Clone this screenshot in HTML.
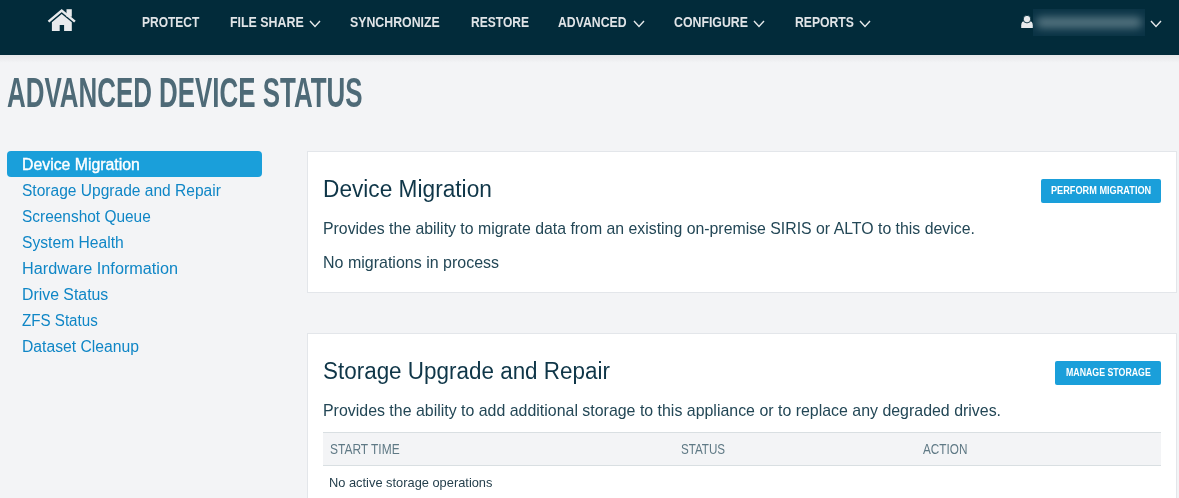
<!DOCTYPE html>
<html><head><meta charset="utf-8">
<style>
html,body{margin:0;padding:0;}
body{width:1179px;height:498px;overflow:hidden;position:relative;background:#f3f4f6;font-family:"Liberation Sans",sans-serif;}
.t{position:absolute;white-space:nowrap;transform-origin:0 0;}
#hdr{position:absolute;left:0;top:0;width:1179px;height:55px;background:#022b3a;}
#shadow{position:absolute;left:0;top:55px;width:1179px;height:8px;background:linear-gradient(#e6e7e9,#f3f4f6);}
.nav{font-weight:700;font-size:14.5px;line-height:14.5px;color:#e0e4e7;top:14.7px;}
.chev{position:absolute;}
.side{font-size:16px;line-height:16px;color:#0f86c6;left:22px;}
#active{position:absolute;left:7px;top:151px;width:255px;height:26px;background:#1a9fda;border-radius:4px;}
.card{position:absolute;left:307px;width:868px;background:#fff;border:1px solid #e3e6ea;}
.h{font-size:23.5px;line-height:23.5px;color:#0f3648;}
.p{font-size:15.7px;line-height:15.7px;color:#234756;}
.btn{position:absolute;background:#1a9fda;border-radius:2px;}
.bt{font-weight:700;font-size:11.3px;line-height:11.3px;color:#fff;}
.th{font-size:14px;line-height:14px;color:#5f7985;}
</style></head><body>
<div id="hdr"></div>
<div id="shadow"></div>
<!-- home icon -->
<svg style="position:absolute;left:47px;top:8px" width="30" height="25" viewBox="0 0 30 25">
  <path d="M1.5 13.6 L14.7 2.6 L27.9 13.6" fill="none" stroke="#e8eaec" stroke-width="2.5" stroke-linecap="butt" stroke-linejoin="miter"/>
  <rect x="19.5" y="1.2" width="5.3" height="7.5" fill="#e8eaec"/>
  <path d="M4.9 14.2 L14.7 6.1 L24.8 14.2 L24.8 23 L17.1 23 L17.1 16.9 L12.7 16.9 L12.7 23 L4.9 23 Z" fill="#e8eaec"/>
</svg>
<div class="t nav" style="left:142px;transform:scaleX(0.826)">PROTECT</div>
<div class="t nav" style="left:230px;transform:scaleX(0.855)">FILE SHARE</div>
<div class="t nav" style="left:350px;transform:scaleX(0.85)">SYNCHRONIZE</div>
<div class="t nav" style="left:471px;transform:scaleX(0.83)">RESTORE</div>
<div class="t nav" style="left:558px;transform:scaleX(0.845)">ADVANCED</div>
<div class="t nav" style="left:674px;transform:scaleX(0.85)">CONFIGURE</div>
<div class="t nav" style="left:795px;transform:scaleX(0.84)">REPORTS</div>
<svg class="chev" style="left:309px;top:20px" width="12" height="8" viewBox="0 0 12 8"><path d="M1 1 L6 6.5 L11 1" fill="none" stroke="#e4e8ea" stroke-width="1.4"/></svg>
<svg class="chev" style="left:633px;top:20px" width="12" height="8" viewBox="0 0 12 8"><path d="M1 1 L6 6.5 L11 1" fill="none" stroke="#e4e8ea" stroke-width="1.4"/></svg>
<svg class="chev" style="left:753px;top:20px" width="12" height="8" viewBox="0 0 12 8"><path d="M1 1 L6 6.5 L11 1" fill="none" stroke="#e4e8ea" stroke-width="1.4"/></svg>
<svg class="chev" style="left:859px;top:20px" width="12" height="8" viewBox="0 0 12 8"><path d="M1 1 L6 6.5 L11 1" fill="none" stroke="#e4e8ea" stroke-width="1.4"/></svg>
<!-- user -->
<svg style="position:absolute;left:1020px;top:15px" width="14" height="14" viewBox="0 0 14 14">
  <path d="M1.2 13 L1.2 10.4 Q1.2 6 5 6 L9 6 Q12.8 6 12.8 10.4 L12.8 13 Z" fill="#e8eaec"/>
  <circle cx="7" cy="4.1" r="3.8" fill="#e8eaec" stroke="#022b3a" stroke-width="0.9"/>
</svg>
<div style="position:absolute;left:1033px;top:9px;width:112px;height:27px;background:#0a3345;overflow:hidden">
  <div style="position:absolute;left:3px;top:8px;width:106px;height:11px;background:#567581;filter:blur(4.5px);border-radius:5px"></div>
</div>
<svg class="chev" style="left:1150px;top:20px" width="12" height="8" viewBox="0 0 12 8"><path d="M1 1 L6 6.5 L11 1" fill="none" stroke="#e4e8ea" stroke-width="1.4"/></svg>

<!-- title -->
<div class="t" style="left:6.5px;top:72.2px;font-size:42.2px;line-height:42.2px;font-weight:700;color:#4e6a77;transform:scaleX(0.614)">ADVANCED DEVICE STATUS</div>

<!-- sidebar -->
<div id="active"></div>
<div class="t side" style="top:157px;color:#fff;-webkit-text-stroke:0.4px #fff;transform:scaleX(0.989)">Device Migration</div>
<div class="t side" style="top:183px;transform:scaleX(0.972)">Storage Upgrade and Repair</div>
<div class="t side" style="top:209px;transform:scaleX(0.965)">Screenshot Queue</div>
<div class="t side" style="top:235px;transform:scaleX(0.978)">System Health</div>
<div class="t side" style="top:261px;transform:scaleX(1.014)">Hardware Information</div>
<div class="t side" style="top:287px;transform:scaleX(0.99)">Drive Status</div>
<div class="t side" style="top:313px;transform:scaleX(0.946)">ZFS Status</div>
<div class="t side" style="top:339px;transform:scaleX(0.982)">Dataset Cleanup</div>

<!-- card 1 -->
<div class="card" style="top:151px;height:140px"></div>
<div class="t h" style="left:323px;top:177.5px;transform:scaleX(0.965)">Device Migration</div>
<div class="btn" style="left:1041px;top:179px;width:120px;height:24px"></div>
<div class="t bt" style="left:1050.5px;top:185.4px;transform:scaleX(0.812)">PERFORM MIGRATION</div>
<div class="t p" style="left:323px;top:221px;transform:scaleX(1.0098)">Provides the ability to migrate data from an existing on-premise SIRIS or ALTO to this device.</div>
<div class="t p" style="left:323px;top:255px;transform:scaleX(1.02)">No migrations in process</div>

<!-- card 2 -->
<div class="card" style="top:333px;height:200px"></div>
<div class="t h" style="left:323px;top:359.8px;transform:scaleX(0.955)">Storage Upgrade and Repair</div>
<div class="btn" style="left:1055px;top:361px;width:106px;height:24px"></div>
<div class="t bt" style="left:1065.5px;top:366.8px;transform:scaleX(0.778)">MANAGE STORAGE</div>
<div class="t p" style="left:322.5px;top:402.9px;transform:scaleX(1.015)">Provides the ability to add additional storage to this appliance or to replace any degraded drives.</div>
<div style="position:absolute;left:323px;top:432px;width:838px;height:32px;background:#f3f4f6;border-top:1px solid #d9dfe2;border-bottom:1px solid #d9dfe2"></div>
<div class="t th" style="left:329.5px;top:442.2px;transform:scaleX(0.855)">START TIME</div>
<div class="t th" style="left:680.5px;top:442.2px;transform:scaleX(0.83)">STATUS</div>
<div class="t th" style="left:922.5px;top:442.2px;transform:scaleX(0.84)">ACTION</div>
<div class="t" style="left:329px;top:475.7px;font-size:13.5px;line-height:13.5px;color:#243f4c;transform:scaleX(0.951)">No active storage operations</div>
</body></html>
